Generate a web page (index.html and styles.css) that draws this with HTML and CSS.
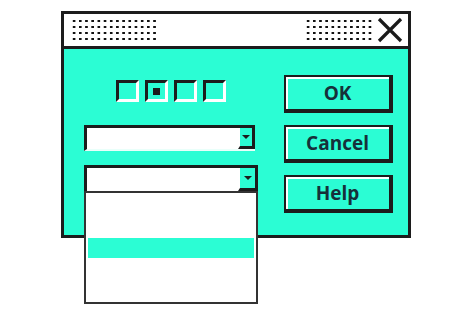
FILE: index.html
```html
<!DOCTYPE html>
<html>
<head>
<meta charset="utf-8">
<link rel="stylesheet" href="styles.css">
</head>
<body>
<div class="window">
  <div class="titlebar">
    <div class="dots dots-left"></div>
    <div class="dots dots-right"></div>
    <svg class="close" width="28" height="28" viewBox="0 0 28 28"><path d="M3 3 L25 25 M25 3 L3 25" stroke="#1a1a1a" stroke-width="3.2" fill="none"/></svg>
  </div>
  <div class="content">
    <div class="left">
      <div class="checks">
        <span class="check"></span>
        <span class="check checked"></span>
        <span class="check"></span>
        <span class="check"></span>
      </div>
      <div class="select">
        <div class="field"></div>
        <div class="arrow"><span class="tri"></span></div>
      </div>
      <div class="select open">
        <div class="field"></div>
        <div class="arrow"><span class="tri"></span></div>
        <div class="list">
          <div class="item"></div>
          <div class="item"></div>
          <div class="item selected"></div>
          <div class="item"></div>
        </div>
      </div>
    </div>
    <div class="buttons">
      <div class="btn">OK</div>
      <div class="btn">Cancel</div>
      <div class="btn">Help</div>
    </div>
  </div>
</div>
</body>
</html>
```
FILE: styles.css
```css
html, body {
  margin: 0;
  padding: 0;
  background: #ffffff;
}
body {
  min-height: 316px;
  position: relative;
}
.window {
  margin: 11px 0 0 61px;
  width: 350px;
  height: 227px;
  box-sizing: border-box;
  border: 3px solid #1c1c1c;
  display: flex;
  flex-direction: column;
}
.titlebar {
  height: 35px;
  box-sizing: border-box;
  border-bottom: 3px solid #1c1c1c;
  background: #ffffff;
  display: flex;
  align-items: center;
  padding: 0 4px 0 7px;
}
.dots {
  height: 24px;
  background-image: radial-gradient(circle, #111 1.15px, transparent 1.45px);
  background-size: 6.2px 6px;
  background-position: 0 0;
}
.dots-left {
  width: 86px;
}
.dots-right {
  width: 68px;
  margin-left: auto;
}
.close {
  margin-left: 3px;
  display: block;
}
.content {
  flex: 1;
  background: #2bfdd4;
  display: flex;
  padding: 26px 15px 0 20px;
}
.left {
  width: 175px;
  display: flex;
  flex-direction: column;
}
.checks {
  display: flex;
  gap: 6px;
  margin: 5px 0 0 32px;
}
.check {
  width: 23px;
  height: 22px;
  box-sizing: border-box;
  border: 3px solid;
  border-color: #1c1c1c #ffffff #ffffff #1c1c1c;
  background: #2bfdd4;
  display: flex;
  align-items: center;
  justify-content: center;
}
.checked::after {
  content: "";
  width: 7px;
  height: 7px;
  background: #1c1c1c;
}
.select {
  position: relative;
  width: 171px;
  height: 26px;
  box-sizing: border-box;
  border-top: 3px solid #1c1c1c;
  border-left: 3px solid #1c1c1c;
  border-bottom: 2px solid #e9fffa;
  display: flex;
  margin-top: 23px;
}
.select + .select {
  margin-top: 14px;
  width: 174px;
  border-bottom: none;
  border-right: 3px solid #1c1c1c;
}
.field {
  flex: 1;
  background: #ffffff;
}
.arrow {
  width: 17px;
  box-sizing: border-box;
  background: #2bfdd4;
  border-right: 3px solid #1c1c1c;
  border-bottom: 3px solid #1c1c1c;
  border-left: 2px solid #ffffff;
  display: flex;
  align-items: center;
  justify-content: center;
}
.open .arrow {
  border-right: none;
}
.tri {
  width: 0;
  height: 0;
  border-left: 4px solid transparent;
  border-right: 4px solid transparent;
  border-top: 4px solid #1c1c1c;
}
.list {
  position: absolute;
  z-index: 5;
  top: 100%;
  left: -3px;
  width: 174px;
  height: 113px;
  box-sizing: border-box;
  border: 2px solid #333;
  background: #ffffff;
  padding: 1px 2px;
  display: flex;
  flex-direction: column;
}
.item {
  height: 22px;
  flex: none;
}
.item.selected {
  height: 20px;
  background: #2bfdd4;
}
.buttons {
  margin-left: auto;
  width: 109px;
  display: flex;
  flex-direction: column;
  gap: 12px;
}
.btn {
  height: 38px;
  box-sizing: border-box;
  border: 2px solid #1c1c1c;
  border-right-width: 4px;
  border-bottom-width: 4px;
  box-shadow: inset 2px 2px 0 #ffffff;
  background: #2bfdd4;
  display: flex;
  align-items: center;
  justify-content: center;
  font-family: "Open Sans", "Noto Sans", sans-serif;
  font-weight: 700;
  font-size: 19px;
  color: #16303a;
}
```
